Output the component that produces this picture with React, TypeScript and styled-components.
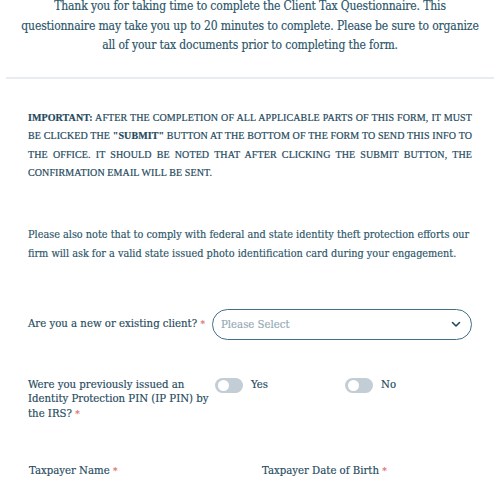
import React from "react";
import styled, { createGlobalStyle } from "styled-components";

const Global = createGlobalStyle`
  html, body { margin: 0; padding: 0; background: #ffffff; }
  body {
    font-family: "DejaVu Serif Condensed", "DejaVu Serif", serif;
    font-stretch: condensed;
    color: #1f4a5e;
    -webkit-text-stroke: 0.15px currentColor;
  }
  * { box-sizing: border-box; }
`;

const Page = styled.div`
  width: 500px;
  height: 484px;
  overflow: hidden;
  padding: 0 6px;
`;

const Intro = styled.p`
  margin: -3px 0 0;
  padding: 0;
  text-align: center;
  font-size: 12px;
  letter-spacing: -0.12px;
  line-height: 19.5px;
  color: #2a5468;
`;

const Divider = styled.hr`
  margin: 21px 0 0;
  border: none;
  height: 2px;
  background: #e8ecf0;
`;

const Content = styled.div`
  padding: 0 22px;
`;

const Important = styled.p`
  margin: 30px 0 0;
  text-align: justify;
  text-transform: uppercase;
  font-family: "Liberation Serif", "Times New Roman", serif;
  font-stretch: normal;
  font-size: 10px;
  line-height: 18.5px;
  letter-spacing: 0.1px;
  color: #1f4a5e;
  -webkit-text-stroke: 0.2px #1f4a5e;
  strong { font-weight: 700; }
`;

const Note = styled.p`
  margin: 42px 0 0;
  font-size: 10.8px;
  line-height: 19px;
  color: #2a5468;
`;

const Row = styled.div<{ $top: number; $align?: string }>`
  display: flex;
  align-items: ${(p) => p.$align || "center"};
  margin-top: ${(p) => p.$top}px;
`;

const Label = styled.label`
  width: 184px;
  flex: none;
  font-size: 11.3px;
  line-height: 14.5px;
  color: #1f4a5e;
`;

const Req = styled.span`
  color: #e06a6a;
  font-size: 10px;
`;

const SelectBox = styled.div`
  flex: 1;
  height: 31px;
  border: 1.5px solid #426f85;
  border-radius: 16px;
  display: flex;
  align-items: center;
  justify-content: space-between;
  padding: 0 10px 0 8px;
  font-size: 11.3px;
  color: #93a8b5;
`;

const Options = styled.div`
  display: flex;
  padding-left: 3px;
`;

const Option = styled.div`
  width: 130px;
  display: flex;
  align-items: flex-start;
  gap: 8px;
  font-size: 11.3px;
  line-height: 14.5px;
  color: #1f4a5e;
`;

const Toggle = styled.span`
  position: relative;
  width: 28px;
  height: 15px;
  border-radius: 8px;
  background: #c3cdd5;
  flex: none;
  &::after {
    content: "";
    position: absolute;
    left: 3px;
    top: 2px;
    width: 11px;
    height: 11px;
    border-radius: 50%;
    background: #ffffff;
  }
`;

const Fields = styled.div`
  display: grid;
  grid-template-columns: 1fr 1fr;
  column-gap: 23px;
  margin-top: 42px;
  padding-left: 1px;
`;

const FieldLabel = styled.div`
  font-size: 11.3px;
  line-height: 16px;
  color: #1f4a5e;
`;

export default function App() {
  return (
    <>
      <Global />
      <Page>
        <Intro>
          Thank you for taking time to complete the Client Tax Questionnaire. This
          <br />
          questionnaire may take you up to 20 minutes to complete. Please be sure to organize
          <br />
          all of your tax documents prior to completing the form.
        </Intro>
        <Divider />
        <Content>
          <Important>
            <strong>Important:</strong> After the completion of all applicable parts of this
            form, it must be clicked the <strong>"Submit"</strong> button at the bottom of the
            form to send this info to the office. It should be noted that after clicking the
            submit button, the confirmation email will be sent.
          </Important>
          <Note>
            Please also note that to comply with federal and state identity theft protection
            efforts our firm will ask for a valid state issued photo identification card during
            your engagement.
          </Note>
          <Row $top={46}>
            <Label>
              Are you a new or existing client? <Req>*</Req>
            </Label>
            <SelectBox>
              <span>Please Select</span>
              <svg width="10" height="7" viewBox="0 0 10 7" fill="none">
                <path d="M1.5 1.5 L5 5 L8.5 1.5" stroke="#1f4a5e" strokeWidth="1.6" strokeLinecap="round" strokeLinejoin="round" />
              </svg>
            </SelectBox>
          </Row>
          <Row $top={38} $align="flex-start">
            <Label>
              Were you previously issued an Identity Protection PIN (IP PIN) by the IRS?{" "}
              <Req>*</Req>
            </Label>
            <Options>
              <Option>
                <Toggle />
                Yes
              </Option>
              <Option>
                <Toggle />
                No
              </Option>
            </Options>
          </Row>
          <Fields>
            <FieldLabel>
              Taxpayer Name <Req>*</Req>
            </FieldLabel>
            <FieldLabel>
              Taxpayer Date of Birth <Req>*</Req>
            </FieldLabel>
          </Fields>
        </Content>
      </Page>
    </>
  );
}
